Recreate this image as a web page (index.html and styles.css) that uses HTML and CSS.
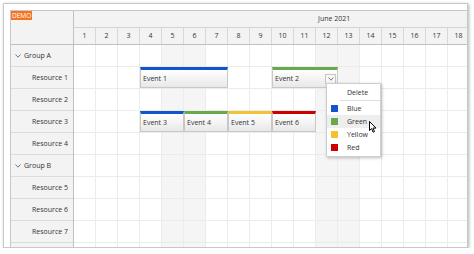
FILE: index.html
```html
<!DOCTYPE html>
<html lang="en">
<head>
  <meta charset="UTF-8">
  <title>Scheduler</title>
  <link rel="stylesheet" href="styles.css">
</head>
<body>

  <div class="frame">
    <div class="scheduler">

      <div class="corner"><span class="demo">DEMO</span></div>

      <div class="timeheader">
        <div class="month">June 2021</div>
        <div class="days">
          <div class="day">1</div><div class="day">2</div><div class="day">3</div>
          <div class="day">4</div><div class="day">5</div><div class="day">6</div>
          <div class="day">7</div><div class="day">8</div><div class="day">9</div>
          <div class="day">10</div><div class="day">11</div><div class="day">12</div>
          <div class="day">13</div><div class="day">14</div><div class="day">15</div>
          <div class="day">16</div><div class="day">17</div><div class="day">18</div>
        </div>
      </div>

      <div class="rowheader">
        <div class="rh group">
          <svg class="toggle" width="6" height="4" viewBox="0 0 6 4"><polyline points="0.5,0.5 3,3.2 5.5,0.5" /></svg>
          Group A
        </div>
        <div class="rh">Resource 1</div>
        <div class="rh">Resource 2</div>
        <div class="rh">Resource 3</div>
        <div class="rh">Resource 4</div>
        <div class="rh group">
          <svg class="toggle" width="6" height="4" viewBox="0 0 6 4"><polyline points="0.5,0.5 3,3.2 5.5,0.5" /></svg>
          Group B
        </div>
        <div class="rh">Resource 5</div>
        <div class="rh">Resource 6</div>
        <div class="rh">Resource 7</div>
        <div class="rh"></div>
      </div>

      <div class="body">
        <div class="row"></div>
        <div class="row">
          <div class="event blue" style="grid-column: 4 / 8">Event 1</div>
          <div class="event green hover" style="grid-column: 10 / 13">
            Event 2
            <span class="event-btn">
              <svg width="6" height="4" viewBox="0 0 6 4"><polyline points="0.5,0.5 3,3.2 5.5,0.5" /></svg>
            </span>
          </div>
        </div>
        <div class="row"></div>
        <div class="row">
          <div class="event blue" style="grid-column: 4 / 6">Event 3</div>
          <div class="event green" style="grid-column: 6 / 8">Event 4</div>
          <div class="event yellow" style="grid-column: 8 / 10">Event 5</div>
          <div class="event red" style="grid-column: 10 / 12">Event 6</div>
        </div>
        <div class="row"></div>
        <div class="row"></div>
        <div class="row"></div>
        <div class="row"></div>
        <div class="row"></div>
        <div class="row"></div>

        <div class="menu">
          <div class="menu-item plain">Delete</div>
          <div class="menu-sep"></div>
          <div class="menu-item"><span class="swatch blue"></span>Blue</div>
          <div class="menu-item active"><span class="swatch green"></span>Green</div>
          <div class="menu-item"><span class="swatch yellow"></span>Yellow</div>
          <div class="menu-item"><span class="swatch red"></span>Red</div>
        </div>

        <svg class="cursor" width="8" height="12" viewBox="0 0 8 12">
          <path d="M0.5 0.5 L0.5 9.5 L2.6 7.6 L4.1 11.2 L5.5 10.6 L4 7.1 L7 7.1 Z" />
        </svg>
      </div>

    </div>
  </div>

</body>
</html>
```

FILE: styles.css
```css
body {
  margin: 0;
  background: #fff;
  font-family: "Open Sans", "DejaVu Sans", sans-serif;
  font-size: 7px;
  color: #333;
}

.frame {
  box-sizing: border-box;
  margin: 3px 0 0 3px;
  width: 465px;
  height: 245px;
  padding: 6px 0 0 6px;
  border: 1px solid #c8c8c8;
  box-shadow: 1px 1px 3px rgba(0, 0, 0, 0.3);
  overflow: hidden;
}

.scheduler {
  display: grid;
  grid-template-columns: 63px 1fr;
  grid-template-rows: 34px 1fr;
  height: 100%;
  border-top: 1px solid #c8c8c8;
  border-left: 1px solid #c8c8c8;
  overflow: hidden;
}

/* corner */
.corner {
  background: #f3f3f3;
  border-right: 1px solid #c0c0c0;
  border-bottom: 1px solid #c0c0c0;
}

.demo {
  display: inline-block;
  background: #f47421;
  color: #fff;
  height: 9px;
  line-height: 9px;
  padding: 0 1px;
  font-size: 6.5px;
}

/* time header */
.timeheader {
  background: #f3f3f3;
  overflow: hidden;
}

.month {
  height: 16px;
  line-height: 16px;
  padding-left: 244px;
  border-bottom: 1px solid #d4d4d4;
}

.days {
  display: flex;
  border-bottom: 1px solid #c0c0c0;
}

.day {
  flex: none;
  width: 21px;
  height: 16px;
  line-height: 16px;
  text-align: center;
  border-right: 1px solid #d8d8d8;
}

/* row header */
.rowheader {
  background: #f3f3f3;
  border-right: 1px solid #c0c0c0;
  overflow: hidden;
}

.rh {
  height: 21px;
  line-height: 21px;
  border-bottom: 1px solid #dcdcdc;
  text-align: right;
  padding-right: 5px;
}

.rh.group {
  display: flex;
  align-items: center;
  gap: 3px;
  text-align: left;
  padding-left: 4px;
}

.toggle polyline,
.event-btn polyline {
  fill: none;
  stroke: #777;
  stroke-width: 1;
}

/* grid body */
.body {
  position: relative;
  overflow: hidden;
  background-image:
    repeating-linear-gradient(to right, transparent 0 21px, #ececec 21px 22px),
    linear-gradient(to right, transparent 88px, #f5f5f5 88px 132px, transparent 132px 242px, #f5f5f5 242px 286px, transparent 286px);
}

.row {
  display: grid;
  grid-template-columns: repeat(18, 22px);
  height: 21px;
  border-bottom: 1px solid #ebebeb;
}

.event {
  grid-row: 1;
  display: flex;
  align-items: center;
  box-sizing: border-box;
  height: 21px;
  padding: 0 0 0 2px;
  border: 1px solid #c8c8c8;
  border-top: 3px solid #999;
  background: linear-gradient(#ffffff, #e8e8e8);
  color: #333;
  white-space: nowrap;
  overflow: hidden;
}

.event.blue { border-top-color: #1155cc; }
.event.green { border-top-color: #6aa84f; }
.event.yellow { border-top-color: #f1c232; }
.event.red { border-top-color: #cc0000; }

.event-btn {
  display: flex;
  align-items: center;
  justify-content: center;
  box-sizing: border-box;
  width: 11px;
  height: 10px;
  margin-left: auto;
  margin-right: 1px;
  border: 1px solid #c4c4c4;
  background: #f7f7f7;
}

/* context menu */
.menu {
  position: absolute;
  left: 252px;
  top: 38px;
  width: 53px;
  padding: 1px 0 2px;
  background: #fff;
  border: 1px solid #cfcfcf;
  box-shadow: 1px 1px 3px rgba(0, 0, 0, 0.25);
}

.menu-item {
  display: flex;
  align-items: center;
  height: 13px;
  padding-left: 4px;
}

.menu-item.plain {
  height: 14px;
  padding-left: 20px;
}

.menu-item.active {
  background: #eeeeee;
}

.menu-sep {
  height: 1px;
  margin: 1px 0 1px 13px;
  background: #dddddd;
}

.swatch {
  width: 7px;
  height: 7px;
  margin-right: 9px;
}

.swatch.blue { background: #1155cc; }
.swatch.green { background: #6aa84f; }
.swatch.yellow { background: #f1c232; }
.swatch.red { background: #cc0000; }

.cursor {
  position: absolute;
  left: 295px;
  top: 76px;
}

.cursor path {
  fill: #fff;
  stroke: #000;
  stroke-width: 1;
}
```
